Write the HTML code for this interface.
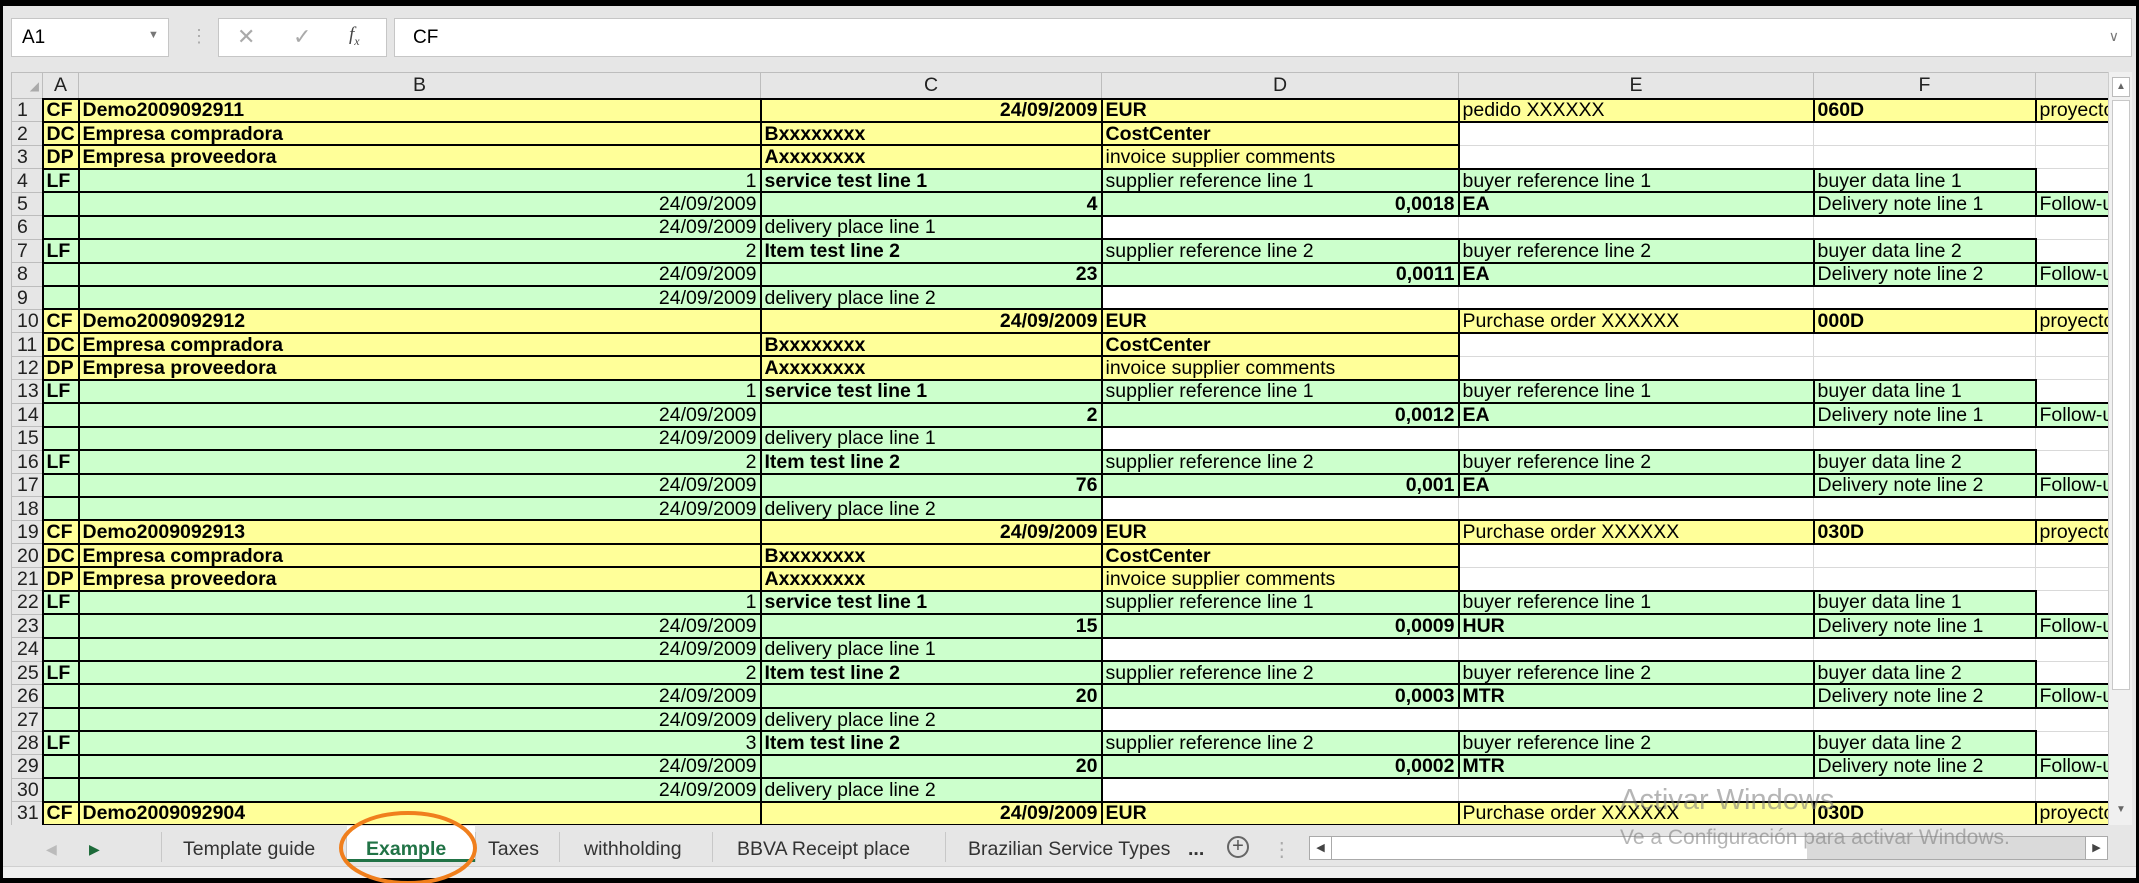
<!DOCTYPE html>
<html><head><meta charset="utf-8"><style>
*{margin:0;padding:0;box-sizing:border-box}
html,body{width:2139px;height:883px;overflow:hidden;background:#000;font-family:"Liberation Sans",Arial,sans-serif}
#win{position:absolute;left:3px;top:6px;width:2133px;height:872px;background:#e6e6e6}
.box{position:absolute;background:#fff;border:1px solid #c6c6c6}
#grid{position:absolute;left:11px;top:72px;width:2097px;height:753px;overflow:hidden;background:#fff}
table{border-collapse:collapse;table-layout:fixed;width:2097px}
td{height:23.45px;font-size:19.5px;line-height:20px;white-space:nowrap;overflow:hidden;padding:0 3px;border:1px solid #d9d9d9;color:#000}
tr.h td{height:26px;background:#e6e6e6;border:1px solid #bdbdbd;text-align:center;color:#222}
td.n{background:#e6e6e6;border:1px solid #bdbdbd;color:#222;text-align:left;padding-left:5px}
td.y{background:#ffff99;border:2px solid #000}
td.g{background:#ccffcc;border:2px solid #000}
.b{font-weight:bold}
.r{text-align:right}
#vs{position:absolute;left:2108px;top:72px;width:24px;height:753px;background:#f0f0f0;border-left:1px solid #ccc}
.tab{position:absolute;top:838px;font-size:19.5px;color:#333}
.sep{position:absolute;top:832px;width:1px;height:30px;background:#c8c8c8}
.wm{position:absolute;color:rgba(120,120,120,0.55);white-space:nowrap}
</style></head><body>
<div id="win"></div>
<div class="box" style="left:11px;top:18px;width:158px;height:39px"><span style="position:absolute;left:10px;top:8px;font-size:19px">A1</span><span style="position:absolute;left:136px;top:10px;font-size:11px;color:#777">▼</span></div>
<div style="position:absolute;left:190px;top:26px;color:#aaa;font-size:18px">⋮</div>
<div class="box" style="left:218px;top:18px;width:169px;height:39px;color:#aaa;font-size:22px"><span style="position:absolute;left:18px;top:5px">✕</span><span style="position:absolute;left:74px;top:5px">✓</span><span style="position:absolute;left:130px;top:5px;font-family:'Liberation Serif',serif;font-style:italic;color:#444;font-size:19px">f<sub style="font-size:12px">x</sub></span></div>
<div class="box" style="left:394px;top:18px;width:1738px;height:39px"><span style="position:absolute;left:18px;top:8px;font-size:19px">CF</span><span style="position:absolute;right:12px;top:9px;font-size:14px;color:#777">∨</span></div>

<div id="grid"><table>
<colgroup><col style="width:31px"><col style="width:36px"><col style="width:682px"><col style="width:341px"><col style="width:357px"><col style="width:355px"><col style="width:222px"><col style="width:73px"></colgroup>
<tr class="h"><td style="color:#aaa;font-size:12px;text-align:right">◢</td><td>A</td><td>B</td><td>C</td><td>D</td><td>E</td><td>F</td><td></td></tr>
<tr><td class="n">1</td><td class="y b">CF</td><td class="y b">Demo2009092911</td><td class="y b r">24/09/2009</td><td class="y b">EUR</td><td class="y">pedido XXXXXX</td><td class="y b">060D</td><td class="y">proyecto</td></tr>
<tr><td class="n">2</td><td class="y b">DC</td><td class="y b">Empresa compradora</td><td class="y b">Bxxxxxxxx</td><td class="y b">CostCenter</td><td></td><td></td><td></td></tr>
<tr><td class="n">3</td><td class="y b">DP</td><td class="y b">Empresa proveedora</td><td class="y b">Axxxxxxxx</td><td class="y">invoice supplier comments</td><td></td><td></td><td></td></tr>
<tr><td class="n">4</td><td class="g b">LF</td><td class="g r">1</td><td class="g b">service test line 1</td><td class="g">supplier reference line 1</td><td class="g">buyer reference line 1</td><td class="g">buyer data line 1</td><td></td></tr>
<tr><td class="n">5</td><td class="g"></td><td class="g r">24/09/2009</td><td class="g b r">4</td><td class="g b r">0,0018</td><td class="g b">EA</td><td class="g">Delivery note line 1</td><td class="g">Follow-up</td></tr>
<tr><td class="n">6</td><td class="g"></td><td class="g r">24/09/2009</td><td class="g">delivery place line 1</td><td></td><td></td><td></td><td></td></tr>
<tr><td class="n">7</td><td class="g b">LF</td><td class="g r">2</td><td class="g b">Item test line 2</td><td class="g">supplier reference line 2</td><td class="g">buyer reference line 2</td><td class="g">buyer data line 2</td><td></td></tr>
<tr><td class="n">8</td><td class="g"></td><td class="g r">24/09/2009</td><td class="g b r">23</td><td class="g b r">0,0011</td><td class="g b">EA</td><td class="g">Delivery note line 2</td><td class="g">Follow-up</td></tr>
<tr><td class="n">9</td><td class="g"></td><td class="g r">24/09/2009</td><td class="g">delivery place line 2</td><td></td><td></td><td></td><td></td></tr>
<tr><td class="n">10</td><td class="y b">CF</td><td class="y b">Demo2009092912</td><td class="y b r">24/09/2009</td><td class="y b">EUR</td><td class="y">Purchase order XXXXXX</td><td class="y b">000D</td><td class="y">proyecto</td></tr>
<tr><td class="n">11</td><td class="y b">DC</td><td class="y b">Empresa compradora</td><td class="y b">Bxxxxxxxx</td><td class="y b">CostCenter</td><td></td><td></td><td></td></tr>
<tr><td class="n">12</td><td class="y b">DP</td><td class="y b">Empresa proveedora</td><td class="y b">Axxxxxxxx</td><td class="y">invoice supplier comments</td><td></td><td></td><td></td></tr>
<tr><td class="n">13</td><td class="g b">LF</td><td class="g r">1</td><td class="g b">service test line 1</td><td class="g">supplier reference line 1</td><td class="g">buyer reference line 1</td><td class="g">buyer data line 1</td><td></td></tr>
<tr><td class="n">14</td><td class="g"></td><td class="g r">24/09/2009</td><td class="g b r">2</td><td class="g b r">0,0012</td><td class="g b">EA</td><td class="g">Delivery note line 1</td><td class="g">Follow-up</td></tr>
<tr><td class="n">15</td><td class="g"></td><td class="g r">24/09/2009</td><td class="g">delivery place line 1</td><td></td><td></td><td></td><td></td></tr>
<tr><td class="n">16</td><td class="g b">LF</td><td class="g r">2</td><td class="g b">Item test line 2</td><td class="g">supplier reference line 2</td><td class="g">buyer reference line 2</td><td class="g">buyer data line 2</td><td></td></tr>
<tr><td class="n">17</td><td class="g"></td><td class="g r">24/09/2009</td><td class="g b r">76</td><td class="g b r">0,001</td><td class="g b">EA</td><td class="g">Delivery note line 2</td><td class="g">Follow-up</td></tr>
<tr><td class="n">18</td><td class="g"></td><td class="g r">24/09/2009</td><td class="g">delivery place line 2</td><td></td><td></td><td></td><td></td></tr>
<tr><td class="n">19</td><td class="y b">CF</td><td class="y b">Demo2009092913</td><td class="y b r">24/09/2009</td><td class="y b">EUR</td><td class="y">Purchase order XXXXXX</td><td class="y b">030D</td><td class="y">proyecto</td></tr>
<tr><td class="n">20</td><td class="y b">DC</td><td class="y b">Empresa compradora</td><td class="y b">Bxxxxxxxx</td><td class="y b">CostCenter</td><td></td><td></td><td></td></tr>
<tr><td class="n">21</td><td class="y b">DP</td><td class="y b">Empresa proveedora</td><td class="y b">Axxxxxxxx</td><td class="y">invoice supplier comments</td><td></td><td></td><td></td></tr>
<tr><td class="n">22</td><td class="g b">LF</td><td class="g r">1</td><td class="g b">service test line 1</td><td class="g">supplier reference line 1</td><td class="g">buyer reference line 1</td><td class="g">buyer data line 1</td><td></td></tr>
<tr><td class="n">23</td><td class="g"></td><td class="g r">24/09/2009</td><td class="g b r">15</td><td class="g b r">0,0009</td><td class="g b">HUR</td><td class="g">Delivery note line 1</td><td class="g">Follow-up</td></tr>
<tr><td class="n">24</td><td class="g"></td><td class="g r">24/09/2009</td><td class="g">delivery place line 1</td><td></td><td></td><td></td><td></td></tr>
<tr><td class="n">25</td><td class="g b">LF</td><td class="g r">2</td><td class="g b">Item test line 2</td><td class="g">supplier reference line 2</td><td class="g">buyer reference line 2</td><td class="g">buyer data line 2</td><td></td></tr>
<tr><td class="n">26</td><td class="g"></td><td class="g r">24/09/2009</td><td class="g b r">20</td><td class="g b r">0,0003</td><td class="g b">MTR</td><td class="g">Delivery note line 2</td><td class="g">Follow-up</td></tr>
<tr><td class="n">27</td><td class="g"></td><td class="g r">24/09/2009</td><td class="g">delivery place line 2</td><td></td><td></td><td></td><td></td></tr>
<tr><td class="n">28</td><td class="g b">LF</td><td class="g r">3</td><td class="g b">Item test line 2</td><td class="g">supplier reference line 2</td><td class="g">buyer reference line 2</td><td class="g">buyer data line 2</td><td></td></tr>
<tr><td class="n">29</td><td class="g"></td><td class="g r">24/09/2009</td><td class="g b r">20</td><td class="g b r">0,0002</td><td class="g b">MTR</td><td class="g">Delivery note line 2</td><td class="g">Follow-up</td></tr>
<tr><td class="n">30</td><td class="g"></td><td class="g r">24/09/2009</td><td class="g">delivery place line 2</td><td></td><td></td><td></td><td></td></tr>
<tr><td class="n">31</td><td class="y b">CF</td><td class="y b">Demo2009092904</td><td class="y b r">24/09/2009</td><td class="y b">EUR</td><td class="y">Purchase order XXXXXX</td><td class="y b">030D</td><td class="y">proyecto</td></tr>
<tr><td class="n">32</td><td class="y"></td><td class="y"></td><td class="y"></td><td class="y"></td><td class="y"></td><td class="y"></td><td class="y"></td></tr>
</table></div>
<div id="vs"><div style="position:absolute;left:3px;top:5px;width:18px;height:20px;background:#fff;border:1px solid #bbb;font-size:10px;text-align:center;line-height:18px;color:#666">▲</div><div style="position:absolute;left:3px;top:28px;width:18px;height:590px;background:#fff;border:1px solid #c8c8c8"></div><div style="position:absolute;left:3px;bottom:4px;width:18px;height:20px;font-size:10px;text-align:center;line-height:18px;color:#666">▼</div></div>

<div style="position:absolute;left:3px;top:825px;width:2133px;height:41px;background:#e6e6e6"></div>
<div style="position:absolute;left:3px;top:866px;width:2133px;height:12px;background:#f0f0f0;border-top:1px solid #d0d0d0"></div>
<div class="tab" style="left:46px;color:#bbb;font-size:14px;top:841px">◀</div>
<div class="tab" style="left:89px;color:#1d6b3a;font-size:14px;top:841px">▶</div>
<div class="sep" style="left:161px"></div>
<div class="tab" style="left:183px">Template guide</div>
<div class="sep" style="left:346px"></div>
<div style="position:absolute;left:347px;top:826px;width:128px;height:36px;background:#fff;border-bottom:3px solid #217346"></div>
<div class="tab b" style="left:366px;color:#217346">Example</div>
<div class="sep" style="left:475px"></div>
<div class="tab" style="left:488px">Taxes</div>
<div class="sep" style="left:559px"></div>
<div class="tab" style="left:584px">withholding</div>
<div class="sep" style="left:712px"></div>
<div class="tab" style="left:737px">BBVA Receipt place</div>
<div class="sep" style="left:945px"></div>
<div class="tab" style="left:968px">Brazilian Service Types</div>
<div class="tab b" style="left:1188px">...</div>
<div style="position:absolute;left:1227px;top:836px;width:22px;height:22px;border:2px solid #666;border-radius:50%;text-align:center;line-height:17px;font-size:20px;color:#555">+</div>
<div class="tab" style="left:1272px;color:#aaa">⋮</div>
<div style="position:absolute;left:1309px;top:836px;width:799px;height:24px;background:#dadada;border:1px solid #aaa"></div>
<div style="position:absolute;left:1310px;top:837px;width:497px;height:22px;background:#fff"></div>
<div style="position:absolute;left:1310px;top:837px;width:22px;height:22px;background:#fff;border-right:1px solid #aaa;font-size:11px;text-align:center;line-height:22px;color:#444">◀</div>
<div style="position:absolute;left:2085px;top:837px;width:22px;height:22px;background:#fff;border-left:1px solid #aaa;font-size:11px;text-align:center;line-height:22px;color:#444">▶</div>
<div class="wm" style="left:1620px;top:784px;font-size:29px">Activar Windows</div>
<div class="wm" style="left:1620px;top:826px;font-size:21px">Ve a Configuración para activar Windows.</div>
<svg style="position:absolute;left:0;top:0" width="2139" height="883"><ellipse cx="408" cy="848" rx="67" ry="35" fill="none" stroke="#f07f1d" stroke-width="4"/></svg>
</body></html>
